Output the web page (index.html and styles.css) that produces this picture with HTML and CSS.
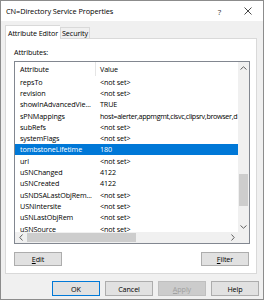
FILE: index.html
```html
<!DOCTYPE html>
<html>
<head>
<meta charset="utf-8">
<link rel="stylesheet" href="styles.css">
</head>
<body>
<div class="window">
  <div class="titlebar">
    <span class="title">CN=Directory Service Properties</span>
    <span class="help">?</span>
    <svg class="close" width="8" height="8" viewBox="0 0 8 8"><path d="M0.5 0.5L7.5 7.5M7.5 0.5L0.5 7.5" stroke="#333" stroke-width="0.9" fill="none"/></svg>
  </div>
  <div class="body">
    <div class="tabs">
      <div class="tab active">Attribute Editor</div>
      <div class="tab">Security</div>
    </div>
    <div class="panel">
      <div class="label">Attributes:</div>
      <div class="listbox">
        <div class="listmain">
          <div class="listcontent">
            <div class="header"><div class="c1">Attribute</div><div class="c2">Value</div></div>
            <div class="row"><div class="c1">repsTo</div><div class="c2">&lt;not set&gt;</div></div>
            <div class="row"><div class="c1">revision</div><div class="c2">&lt;not set&gt;</div></div>
            <div class="row"><div class="c1">showInAdvancedVie...</div><div class="c2">TRUE</div></div>
            <div class="row"><div class="c1">sPNMappings</div><div class="c2 tight">host=alerter,appmgmt,cisvc,clipsrv,browser,d</div></div>
            <div class="row"><div class="c1">subRefs</div><div class="c2">&lt;not set&gt;</div></div>
            <div class="row"><div class="c1">systemFlags</div><div class="c2">&lt;not set&gt;</div></div>
            <div class="row selected"><div class="c1">tombstoneLifetime</div><div class="c2">180</div></div>
            <div class="row"><div class="c1">url</div><div class="c2">&lt;not set&gt;</div></div>
            <div class="row"><div class="c1">uSNChanged</div><div class="c2">4122</div></div>
            <div class="row"><div class="c1">uSNCreated</div><div class="c2">4122</div></div>
            <div class="row"><div class="c1">uSNDSALastObjRem...</div><div class="c2">&lt;not set&gt;</div></div>
            <div class="row"><div class="c1">USNIntersite</div><div class="c2">&lt;not set&gt;</div></div>
            <div class="row"><div class="c1">uSNLastObjRem</div><div class="c2">&lt;not set&gt;</div></div>
            <div class="row"><div class="c1">uSNSource</div><div class="c2">&lt;not set&gt;</div></div>
          </div>
          <div class="vscroll">
            <div class="arrow"><svg width="7" height="4" viewBox="0 0 7 4"><path d="M0.5 3.5L3.5 0.8L6.5 3.5" stroke="#606060" fill="none" stroke-width="1"/></svg></div>
            <div class="vtrack"><div class="vthumb"></div></div>
            <div class="arrow"><svg width="7" height="4" viewBox="0 0 7 4"><path d="M0.5 0.5L3.5 3.2L6.5 0.5" stroke="#606060" fill="none" stroke-width="1"/></svg></div>
          </div>
        </div>
        <div class="hrow">
          <div class="hscroll">
            <div class="arrow"><svg width="4" height="7" viewBox="0 0 4 7"><path d="M3.5 0.5L0.8 3.5L3.5 6.5" stroke="#606060" fill="none" stroke-width="1"/></svg></div>
            <div class="htrack"><div class="hthumb"></div></div>
            <div class="arrow"><svg width="4" height="7" viewBox="0 0 4 7"><path d="M0.5 0.5L3.2 3.5L0.5 6.5" stroke="#606060" fill="none" stroke-width="1"/></svg></div>
          </div>
          <div class="corner"></div>
        </div>
      </div>
      <div class="btnrow">
        <button class="btn"><u>E</u>dit</button>
        <button class="btn"><u>F</u>ilter</button>
      </div>
    </div>
    <div class="footer">
      <button class="btn default">OK</button>
      <button class="btn">Cancel</button>
      <button class="btn disabled"><u>A</u>pply</button>
      <button class="btn">Help</button>
    </div>
  </div>
</div>
</body>
</html>
```
FILE: styles.css
```css
* { box-sizing: border-box; }
html, body { margin: 0; padding: 0; }
body {
  width: 264px;
  height: 300px;
  font-family: "Open Sans", "Noto Sans", sans-serif;
  font-size: 7.2px;
  letter-spacing: -0.1px;
  color: #000;
  background: #fff;
}
.window {
  width: 264px;
  height: 300px;
  border: 1px solid #8c8c8c;
  display: flex;
  flex-direction: column;
}
.titlebar {
  height: 20px;
  background: #fff;
  display: flex;
  align-items: center;
  padding-left: 5px;
}
.title { flex: 1; font-size: 7.4px; }
.help { font-size: 8px; color: #333; margin-right: 23px; }
.close { margin-right: 11px; }
.body {
  flex: 1;
  background: #f0f0f0;
  display: flex;
  flex-direction: column;
}
.tabs {
  display: flex;
  align-items: flex-end;
  padding-left: 4px;
  margin-top: 3px;
  height: 14px;
}
.tab {
  height: 11px;
  width: 30px;
  border: 1px solid #d9d9d9;
  border-bottom: none;
  display: flex;
  align-items: center;
  justify-content: center;
  background: #f0f0f0;
}
.tab.active {
  height: 14px;
  width: 55px;
  background: #fff;
  margin-bottom: -1px;
  position: relative;
  z-index: 1;
  border-right: none;
}
.panel {
  margin: 0 6px 0 4px;
  height: 236px;
  background: #fff;
  border: 1px solid #d9d9d9;
  padding: 8px 0 0 8px;
}
.label { height: 10px; line-height: 10px; }
.listbox {
  margin-top: 4px;
  width: 236px;
  height: 183px;
  border: 1px solid #828790;
  display: flex;
  flex-direction: column;
}
.listmain { display: flex; height: 170px; }
.listcontent { width: 223px; overflow: hidden; }
.header {
  height: 14px;
  display: flex;
  align-items: center;
}
.header .c1 { border-right: 1px solid #e5e5e5; height: 14px; line-height: 14px; }
.row {
  height: 11.3px;
  display: flex;
  align-items: center;
  white-space: nowrap;
}
.c1 { width: 81px; padding-left: 5px; flex: none; white-space: nowrap; overflow: hidden; }
.c2 { padding-left: 4px; white-space: nowrap; }
.c2.tight { letter-spacing: -0.34px; }
.row.selected { background: #0078d7; color: #fff; }
.vscroll {
  width: 11px;
  background: #f0f0f0;
  display: flex;
  flex-direction: column;
}
.vscroll .arrow { height: 11px; display: flex; align-items: center; justify-content: center; }
.vtrack { flex: 1; position: relative; }
.vthumb {
  position: absolute;
  left: 1px;
  right: 1px;
  top: 101px;
  height: 32px;
  background: #cdcdcd;
}
.hrow { display: flex; height: 11px; }
.hscroll {
  width: 223px;
  background: #f0f0f0;
  display: flex;
}
.hscroll .arrow { width: 11px; display: flex; align-items: center; justify-content: center; }
.htrack { flex: 1; position: relative; }
.hthumb {
  position: absolute;
  top: 1px;
  bottom: 1px;
  left: 1px;
  width: 109px;
  background: #cdcdcd;
}
.corner { width: 11px; background: #f0f0f0; }
.btnrow {
  display: flex;
  justify-content: space-between;
  width: 235px;
  margin-top: 8px;
}
.btn {
  width: 48px;
  height: 14px;
  padding: 0;
  margin: 0;
  font-family: inherit;
  font-size: 7.2px;
  letter-spacing: -0.1px;
  color: #000;
  background: #e1e1e1;
  border: 1px solid #adadad;
  display: flex;
  align-items: center;
  justify-content: center;
}
.btn u { text-decoration: underline; text-underline-offset: 1px; }
.btn.default { border-color: #0078d7; }
.btn.disabled { color: #a0a0a0; background: #cccccc; border-color: #bfbfbf; }
.footer {
  display: flex;
  justify-content: flex-end;
  gap: 5px;
  padding-right: 4px;
  margin-top: 7px;
}
.footer .btn { height: 15px; }
```
